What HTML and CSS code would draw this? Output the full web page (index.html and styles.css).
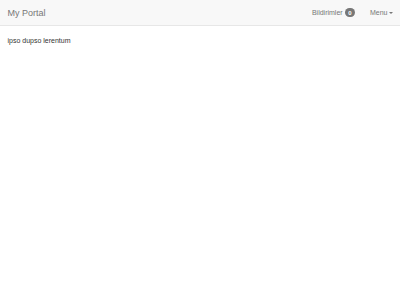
FILE: index.html
```html
<!DOCTYPE html>
<html>
<head>
<meta charset="utf-8">
<link rel="stylesheet" href="styles.css">
</head>
<body>
<nav class="navbar">
  <a class="brand">My Portal</a>
  <ul class="nav">
    <li><a>Bildirimler <span class="badge">0</span></a></li>
    <li><a>Menu<span class="caret"></span></a></li>
  </ul>
</nav>
<div class="content">ipso dupso lerentum</div>
</body>
</html>
```
FILE: styles.css
```css
html, body { margin: 0; padding: 0; background: #fff; }
body { font-family: "Liberation Sans", Arial, sans-serif; font-size: 7px; line-height: 10px; color: #333; }
.navbar {
  display: flex; align-items: center; justify-content: space-between;
  height: 25px; background: #f8f8f8; border-bottom: 1px solid #e7e7e7;
  padding: 0 7.5px;
}
.brand { font-size: 9px; color: #777; }
.nav { list-style: none; margin: 0; padding: 0; display: flex; gap: 15px; }
.nav a { color: #777; display: flex; align-items: center; }
.badge {
  display: inline-block; background: #777; color: #fff; font-size: 6px; font-weight: bold;
  border-radius: 5px; padding: 1.5px 3.5px; line-height: 6px; margin-left: 2px;
}
.caret {
  display: inline-block; width: 0; height: 0; margin-left: 1px;
  border-top: 2px solid #777; border-left: 2px solid transparent; border-right: 2px solid transparent;
}
.content { padding: 10px 7.5px; }
```
